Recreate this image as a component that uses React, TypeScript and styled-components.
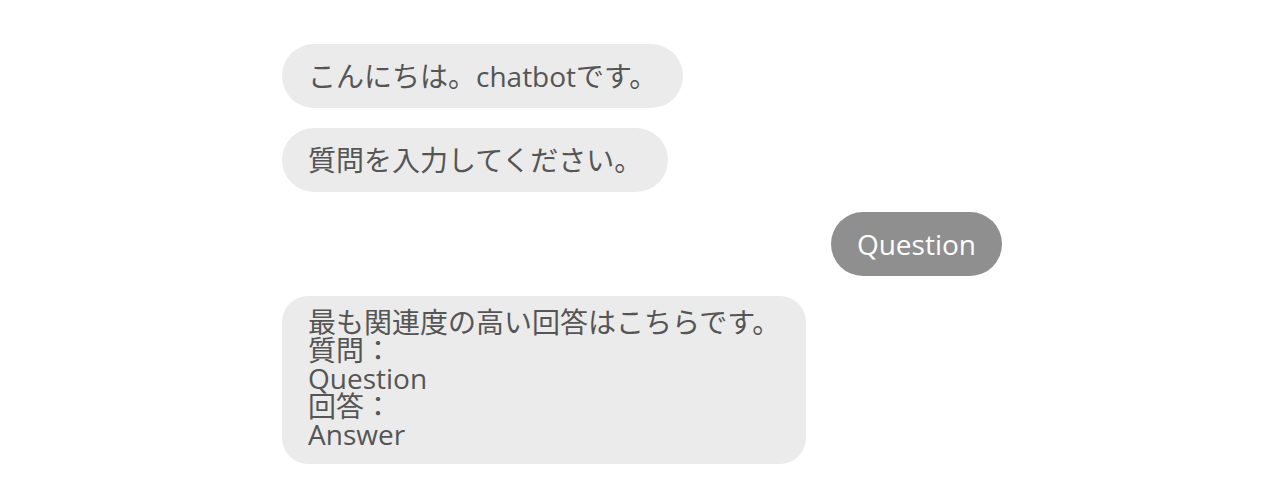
import { FC } from 'react'
import styled, { createGlobalStyle, css } from 'styled-components'

type Sender = 'bot' | 'user'

type MessageProps = {
	id: number
	from: Sender
	lines: string[]
}

const messages: MessageProps[] = [
	{ id: 1, from: 'bot', lines: ['こんにちは。chatbotです。'] },
	{ id: 2, from: 'bot', lines: ['質問を入力してください。'] },
	{ id: 3, from: 'user', lines: ['Question'] },
	{
		id: 4,
		from: 'bot',
		lines: ['最も関連度の高い回答はこちらです。', '質問：', 'Question', '回答：', 'Answer']
	}
]

const App: FC = () => {
	return (
		<>
			<GlobalStyle />
			<ChatLog>
				{messages.map((message) => (
					<Bubble key={message.id} from={message.from} multiline={message.lines.length > 1}>
						{message.lines.map((line, index) => (
							<Line key={index}>{line}</Line>
						))}
					</Bubble>
				))}
			</ChatLog>
		</>
	)
}

const GlobalStyle = createGlobalStyle`
	body {
		margin: 0;
		background: #ffffff;
		font-family: 'Open Sans', 'Noto Sans CJK JP', sans-serif;
	}
`

const ChatLog = styled.div`
	display: flex;
	flex-direction: column;
	gap: 20px;
	margin: 0 auto;
	padding-top: 44px;
	width: 720px;
`

const Bubble = styled.div<{ from: Sender; multiline: boolean }>`
	font-size: 28px;
	line-height: 28px;
	padding: 18px 26px;
	${(props) =>
		props.from === 'user'
			? css`
					align-self: flex-end;
					background: #8e8f8e;
					border-radius: 32px;
					color: #ffffff;
			  `
			: css`
					align-self: flex-start;
					background: #ebebeb;
					border-radius: 32px;
					color: #555555;
			  `}
	${(props) =>
		props.multiline &&
		css`
			border-radius: 26px;
			padding: 12px 26px 16px;
		`}
`

const Line = styled.div`
	white-space: nowrap;
`

export default App
